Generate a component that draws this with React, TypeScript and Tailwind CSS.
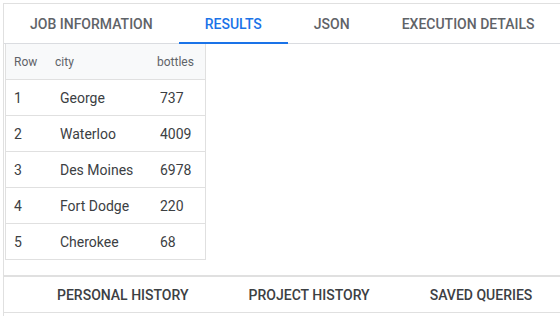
const tabs = ["JOB INFORMATION", "RESULTS", "JSON", "EXECUTION DETAILS"]

const rows = [
  { n: 1, city: "George", bottles: 737 },
  { n: 2, city: "Waterloo", bottles: 4009 },
  { n: 3, city: "Des Moines", bottles: 6978 },
  { n: 4, city: "Fort Dodge", bottles: 220 },
  { n: 5, city: "Cherokee", bottles: 68 },
]

const bottomTabs = ["PERSONAL HISTORY", "PROJECT HISTORY", "SAVED QUERIES"]

export default function App() {
  return (
    <div
      className="w-[560px] h-[316px] bg-white overflow-hidden pt-[3px] pl-[3px]"
      style={{ fontFamily: "Roboto, 'Liberation Sans', sans-serif" }}
    >
      <div className="h-full border-l border-t border-[#e0e0e0] flex flex-col">
        {/* top tabs */}
        <div className="flex h-[40px] border-b border-[#dadce0] shrink-0">
          {tabs.map((t) => {
            const active = t === "RESULTS"
            return (
              <div
                key={t}
                className={
                  active
                    ? "relative px-[26px] pt-[1px] flex items-center text-[14px] font-medium text-[#1a73e8] whitespace-nowrap"
                    : "relative px-[26px] pt-[1px] flex items-center text-[14px] font-medium text-[#5f6368] whitespace-nowrap"
                }
              >
                {t}
                {active && <div className="absolute left-0 right-0 bottom-[-1px] h-[2px] bg-[#1a73e8]" />}
              </div>
            )
          })}
        </div>

        {/* results table */}
        <div className="flex-1 pl-[1px]">
          <div className="w-[201px] border border-t-0 border-[#e0e0e0]">
            <div className="flex h-[36px] items-center pt-[1px] bg-[#f8f9fa] border-b border-[#e0e0e0] text-[12px] text-[#5f6368]">
              <div className="w-[42px] pl-[8px]">Row</div>
              <div className="w-[103px] pl-[7px]">city</div>
              <div className="pl-[6px]">bottles</div>
            </div>
            {rows.map((r, i) => (
              <div
                key={r.n}
                className={
                  i < rows.length - 1
                    ? "flex h-[36px] items-center pt-[1px] border-b border-[#e0e0e0] text-[14px] text-[#3c4043]"
                    : "flex h-[35px] items-center pt-[1px] text-[14px] text-[#3c4043]"
                }
              >
                <div className="w-[42px] pl-[8px]">{r.n}</div>
                <div className="w-[103px] pl-[12px]">{r.city}</div>
                <div className="pl-[9px]">{r.bottles}</div>
              </div>
            ))}
          </div>
        </div>

        {/* bottom tabs */}
        <div className="h-[38px] pt-[2px] border-t-2 border-b border-[#e0e0e0] flex items-center pl-[23px] shrink-0 mb-[3px]">
          {bottomTabs.map((t) => (
            <div key={t} className="px-[30px] text-[14px] font-medium text-[#3c4043] whitespace-nowrap">
              {t}
            </div>
          ))}
        </div>
      </div>
    </div>
  )
}
